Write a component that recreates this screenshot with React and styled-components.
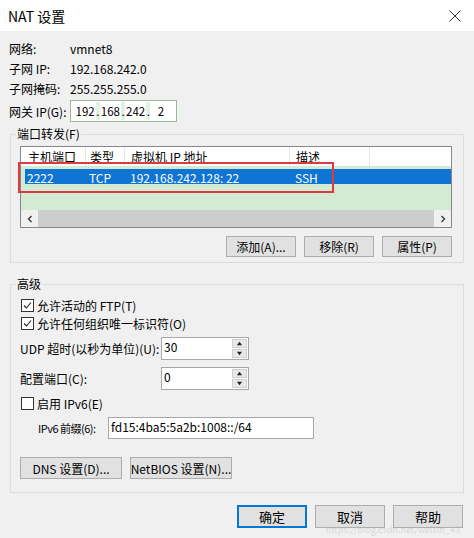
import React from "react"
import styled, {createGlobalStyle} from "styled-components"

const Global = createGlobalStyle`
  html, body {
    margin: 0;
    padding: 0;
    background: #f0f0f0;
  }
  * {
    box-sizing: border-box;
  }
`

const FONT = `"Noto Sans CJK SC", "Noto Sans", sans-serif`

const CheckMark = () => (
  <svg width="11" height="11" viewBox="0 0 11 11">
    <path d="M2 5.5 L4.5 8 L9 2.5" fill="none" stroke="#222" strokeWidth="1.1"/>
  </svg>
)

const Arrow = ({dir}) => (
  <svg width="8" height="8" viewBox="0 0 8 8">
    {dir === "left" && <path d="M5.5 1 L2.5 4 L5.5 7" fill="none" stroke="#333" strokeWidth="1.3"/>}
    {dir === "right" && <path d="M2.5 1 L5.5 4 L2.5 7" fill="none" stroke="#333" strokeWidth="1.3"/>}
    {dir === "up" && <path d="M1 6 L4 2 L7 6 Z" fill="#222"/>}
    {dir === "down" && <path d="M1 2 L4 6 L7 2 Z" fill="#222"/>}
  </svg>
)

const App = () => {
  return (
    <>
      <Global/>
      <Window>
        <TitleBar>
          <Title>NAT 设置</Title>
          <svg width="12" height="12" viewBox="0 0 12 12">
            <path d="M0.5 0.5 L11.5 11.5 M11.5 0.5 L0.5 11.5" stroke="#333" strokeWidth="1"/>
          </svg>
        </TitleBar>
        <Body>
          <InfoGrid>
            <span>网络:</span><span>vmnet8</span>
            <span>子网 IP:</span><span>192.168.242.0</span>
            <span>子网掩码:</span><span>255.255.255.0</span>
          </InfoGrid>
          <GatewayRow>
            <span>网关 IP(G):</span>
            <IpBox>
              <IpPart>192</IpPart><IpDot>.</IpDot>
              <IpPart>168</IpPart><IpDot>.</IpDot>
              <IpPart>242</IpPart><IpDot>.</IpDot>
              <IpPart>2</IpPart>
            </IpBox>
          </GatewayRow>

          <Group $bottom={5}>
            <Legend>端口转发(F)</Legend>
            <ListView>
              <HeaderRow>
                <Cell $pad={7}>主机端口</Cell>
                <Cell $pad={4} $line>类型</Cell>
                <Cell $pad={6} $line>虚拟机 IP 地址</Cell>
                <Cell $pad={6} $line>描述</Cell>
                <Cell $line/>
              </HeaderRow>
              <Rows>
                <SelectedRow>
                  <Cell $pad={2}>2222</Cell>
                  <Cell $pad={4}>TCP</Cell>
                  <Cell $pad={6}>192.168.242.128: 22</Cell>
                  <Cell $pad={6}>SSH</Cell>
                  <Cell/>
                </SelectedRow>
              </Rows>
              <ScrollBar>
                <ScrollBtn><Arrow dir="left"/></ScrollBtn>
                <Thumb/>
                <ScrollBtn><Arrow dir="right"/></ScrollBtn>
              </ScrollBar>
              <Highlight/>
            </ListView>
            <ButtonRow $gap={8} $top={8}>
              <Button>添加(A)...</Button>
              <Button>移除(R)</Button>
              <Button>属性(P)</Button>
            </ButtonRow>
          </Group>

          <Group $top={13} $bottom={13}>
            <Legend>高级</Legend>
            <CheckRow>
              <Box><CheckMark/></Box>允许活动的 FTP(T)
            </CheckRow>
            <CheckRow>
              <Box><CheckMark/></Box>允许任何组织唯一标识符(O)
            </CheckRow>
            <FieldRow $top={5}>
              <FieldLabel>UDP 超时(以秒为单位)(U):</FieldLabel>
              <Spinner>
                <SpinValue>30</SpinValue>
                <SpinButtons>
                  <SpinBtn><Arrow dir="up"/></SpinBtn>
                  <SpinBtn><Arrow dir="down"/></SpinBtn>
                </SpinButtons>
              </Spinner>
            </FieldRow>
            <FieldRow $top={7}>
              <FieldLabel>配置端口(C):</FieldLabel>
              <Spinner>
                <SpinValue>0</SpinValue>
                <SpinButtons>
                  <SpinBtn><Arrow dir="up"/></SpinBtn>
                  <SpinBtn><Arrow dir="down"/></SpinBtn>
                </SpinButtons>
              </Spinner>
            </FieldRow>
            <CheckRow $top={4}>
              <Box/>启用 IPv6(E)
            </CheckRow>
            <PrefixRow>
              <PrefixLabel>IPv6 前缀(6):</PrefixLabel>
              <TextBox>fd15:4ba5:5a2b:1008::/64</TextBox>
            </PrefixRow>
            <ButtonRow $gap={8} $top={18} $start>
              <Button $w={102} $h={22}>DNS 设置(D)...</Button>
              <Button $w={102} $h={22}>NetBIOS 设置(N)...</Button>
            </ButtonRow>
          </Group>

          <Footer>
            <Button $w={70} $h={23} $primary>确定</Button>
            <Button $w={70} $h={23}>取消</Button>
            <Button $w={70} $h={23}>帮助</Button>
            <Watermark>https://blog.csdn.net/weixin_43</Watermark>
          </Footer>
        </Body>
      </Window>
    </>
  )
}

const Window = styled.div`
  width: 474px;
  height: 538px;
  display: flex;
  flex-direction: column;
  font-family: ${FONT};
  font-size: 12px;
  color: #000;
  overflow: hidden;
`

const TitleBar = styled.div`
  height: 31px;
  background: #fff;
  display: flex;
  align-items: center;
  justify-content: space-between;
  padding: 0 13px 0 8px;
`

const Title = styled.span`
  font-size: 14px;
`

const Body = styled.div`
  flex: 1;
  background: #f0f0f0;
  padding-top: 7px;
  display: flex;
  flex-direction: column;
`

const InfoGrid = styled.div`
  display: grid;
  grid-template-columns: 61px auto;
  grid-auto-rows: 20px;
  align-items: center;
  padding-left: 9px;
`

const GatewayRow = styled.div`
  display: flex;
  align-items: center;
  gap: 3px;
  height: 22px;
  margin-top: 2px;
  padding-left: 9px;
`

const IpBox = styled.div`
  width: 107px;
  height: 22px;
  border: 1px solid #9ab89a;
  background: #fff;
  display: flex;
  align-items: stretch;
  padding: 1px 4px;
  font-size: 11.5px;
`

const IpPart = styled.span`
  flex: 1;
  display: flex;
  align-items: center;
  justify-content: center;
`

const IpDot = styled.span`
  width: 4px;
  display: flex;
  align-items: center;
  justify-content: center;
  background: #e3f1e3;
`

const Group = styled.fieldset`
  margin: ${p => p.$top || 4}px 10px 0 10px;
  padding: 4px 11px ${p => p.$bottom}px 9px;
  border: 1px solid #dcdcdc;
  min-width: 0;
`

const Legend = styled.legend`
  padding: 0 1px;
  margin-left: -4px;
  line-height: 16px;
`

const ListView = styled.div`
  position: relative;
  height: 82px;
  border: 1px solid #828790;
  background: #d3ebd3;
  display: flex;
  flex-direction: column;
`

const cols = `64px 39px 165px 80px 1fr`

const HeaderRow = styled.div`
  height: 19px;
  background: #fff;
  display: grid;
  grid-template-columns: ${cols};
  align-items: stretch;
`

const Cell = styled.div`
  padding-left: ${p => p.$pad || 0}px;
  display: flex;
  align-items: center;
  white-space: nowrap;
  border-left: ${p => (p.$line ? "1px solid #e5e5e5" : "none")};
`

const Rows = styled.div`
  flex: 1;
  padding-top: 3px;
`

const SelectedRow = styled.div`
  height: 15px;
  margin-left: 4px;
  background: #0f74d4;
  color: #fff;
  display: grid;
  grid-template-columns: 60px 39px 165px 80px 1fr;
`

const ScrollBar = styled.div`
  height: 17px;
  background: #f0f0f0;
  display: flex;
`

const ScrollBtn = styled.div`
  width: 17px;
  display: flex;
  align-items: center;
  justify-content: center;
`

const Thumb = styled.div`
  flex: 1;
  background: #cdcdcd;
`

const Highlight = styled.div`
  position: absolute;
  left: -3px;
  top: 15px;
  width: 316px;
  height: 31px;
  border: 2px solid #df3a3f;
`

const ButtonRow = styled.div`
  display: flex;
  justify-content: ${p => (p.$start ? "flex-start" : "flex-end")};
  gap: ${p => p.$gap}px;
  margin-top: ${p => p.$top}px;
`

const Button = styled.div`
  width: ${p => p.$w || 70}px;
  height: ${p => p.$h || 21}px;
  background: #e1e1e1;
  border: ${p => (p.$primary ? "2px solid #0078d7" : "1px solid #adadad")};
  display: flex;
  align-items: center;
  justify-content: center;
  white-space: nowrap;
  font-size: ${p => (p.$h === 23 ? "13px" : "12px")};
`

const CheckRow = styled.div`
  height: 18px;
  display: flex;
  align-items: center;
  gap: 3px;
  padding-left: 1px;
  margin-top: ${p => p.$top || 0}px;
`

const Box = styled.span`
  width: 13px;
  height: 13px;
  border: 1px solid #333;
  background: #fff;
  display: flex;
  align-items: center;
  justify-content: center;
`

const FieldRow = styled.div`
  display: flex;
  align-items: center;
  margin-top: ${p => p.$top}px;
`

const FieldLabel = styled.span`
  width: 141px;
`

const Spinner = styled.div`
  width: 88px;
  height: 23px;
  border: 1px solid #a8a8a8;
  background: #fff;
  display: flex;
`

const SpinValue = styled.span`
  flex: 1;
  padding: 1px 0 0 2px;
  line-height: 16px;
`

const SpinButtons = styled.div`
  width: 17px;
  display: flex;
  flex-direction: column;
  padding: 1px;
  gap: 1px;
`

const SpinBtn = styled.div`
  flex: 1;
  background: #e8e8e8;
  border: 1px solid #d0d0d0;
  display: flex;
  align-items: center;
  justify-content: center;
  & svg {
    width: 7px;
    height: 7px;
  }
`

const PrefixRow = styled.div`
  display: flex;
  align-items: center;
  padding-left: 18px;
  margin-top: 5px;
`

const PrefixLabel = styled.span`
  width: 70px;
  font-size: 11px;
  letter-spacing: -0.5px;
  white-space: nowrap;
`

const TextBox = styled.div`
  width: 206px;
  height: 22px;
  border: 1px solid #a8a8a8;
  background: #fff;
  padding: 1px 0 0 2px;
  line-height: 16px;
`

const Footer = styled.div`
  position: relative;
  display: flex;
  justify-content: flex-end;
  gap: 8px;
  margin-top: 12px;
  padding-right: 11px;
`

const Watermark = styled.span`
  position: absolute;
  right: 14px;
  top: 20px;
  font-size: 9px;
  line-height: 10px;
  color: rgba(190, 190, 190, 0.5);
  pointer-events: none;
`

export default App
